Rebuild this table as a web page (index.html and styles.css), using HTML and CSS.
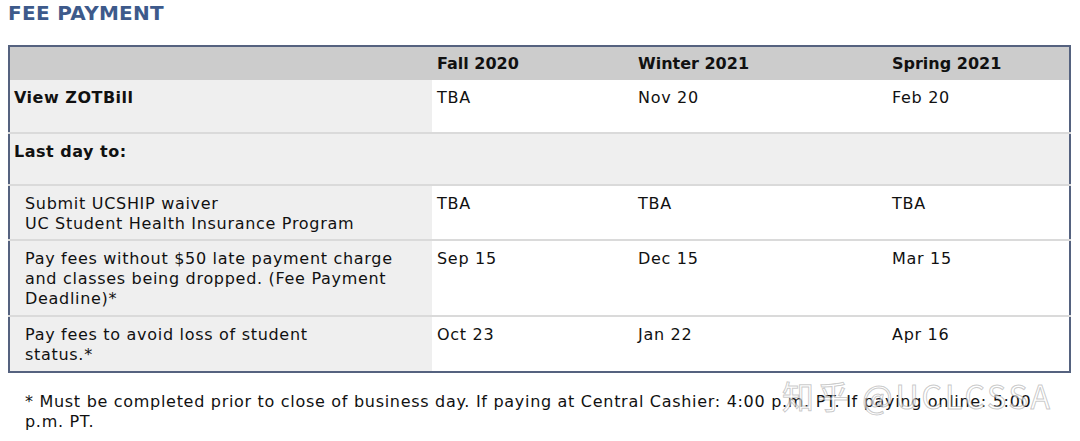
FILE: index.html
```html
<!DOCTYPE html>
<html>
<head>
<meta charset="utf-8">
<link rel="stylesheet" href="styles.css">
</head>
<body>
<h2 class="title">FEE PAYMENT</h2>
<table class="fees">
  <colgroup>
    <col class="c1"><col class="c2"><col class="c3"><col class="c4">
  </colgroup>
  <thead>
    <tr class="head">
      <th></th><th>Fall 2020</th><th>Winter 2021</th><th>Spring 2021</th>
    </tr>
  </thead>
  <tbody>
    <tr class="r1">
      <td class="label strong">View ZOTBill</td><td>TBA</td><td>Nov 20</td><td>Feb 20</td>
    </tr>
    <tr class="r2">
      <td class="label strong span" colspan="4">Last day to:</td>
    </tr>
    <tr class="r3">
      <td class="label indent">Submit UCSHIP waiver<br>UC Student Health Insurance Program</td><td>TBA</td><td>TBA</td><td>TBA</td>
    </tr>
    <tr class="r4">
      <td class="label indent">Pay fees without $50 late payment charge and classes being dropped. (Fee Payment Deadline)*</td><td>Sep 15</td><td>Dec 15</td><td>Mar 15</td>
    </tr>
    <tr class="r5">
      <td class="label indent">Pay fees to avoid loss of student<br>status.*</td><td>Oct 23</td><td>Jan 22</td><td>Apr 16</td>
    </tr>
  </tbody>
</table>
<p class="note">* Must be completed prior to close of business day. If paying at Central Cashier: 4:00 p.m. PT. If paying online: 5:00 p.m. PT.</p>
<div class="watermark">知乎 @UCLCSSA</div>
</body>
</html>
```
FILE: styles.css
```css
html, body {
  margin: 0;
  padding: 0;
  background: #ffffff;
}
body {
  font-family: "DejaVu Sans", Verdana, sans-serif;
  font-size: 16px;
  line-height: 20px;
  letter-spacing: 0.7px;
  color: #111111;
  position: relative;
  width: 1080px;
  height: 441px;
  overflow: hidden;
}
.title {
  margin: 0;
  padding: 2px 0 0 8px;
  font-size: 20px;
  line-height: 22px;
  letter-spacing: 0.3px;
  font-weight: bold;
  color: #3d5a8b;
}
.fees {
  margin: 21px 0 0 8px;
  width: 1063px;
  border: 2px solid #55627f;
  border-collapse: collapse;
  table-layout: fixed;
}
.c1 { width: 423px; }
.c2 { width: 201px; }
.c3 { width: 254px; }
.c4 { width: auto; }
.fees th {
  background: #cccccc;
  text-align: left;
  font-weight: bold;
  letter-spacing: 0;
  height: 33px;
  padding: 0 5px;
  vertical-align: middle;
}
.fees td {
  vertical-align: top;
  padding: 8px 5px 0 5px;
  background: #ffffff;
  border-top: 2px solid #dadada;
}
.fees tr.r1 td { border-top: none; }
.fees td.label {
  background: #efefef;
  padding-left: 4px;
}
.fees td.indent {
  padding-left: 15px;
  padding-right: 33px;
}
.fees td.strong {
  font-weight: bold;
  letter-spacing: 0.5px;
}
.r1 td { height: 44px; }
.r2 td { height: 42px; }
.r3 td { height: 45px; }
.r4 td { height: 66px; }
.r5 td { height: 46px; }
.note {
  margin: 19px 0 0 25px;
  width: 1025px;
}
.watermark {
  position: absolute;
  left: 782px;
  top: 376px;
  font-family: "Noto Sans CJK SC", "DejaVu Sans", sans-serif;
  font-size: 32px;
  line-height: 38px;
  letter-spacing: 3px;
  color: rgba(255, 255, 255, 0.6);
  -webkit-text-stroke: 1px rgba(120, 120, 120, 0.4);
  pointer-events: none;
}
```
